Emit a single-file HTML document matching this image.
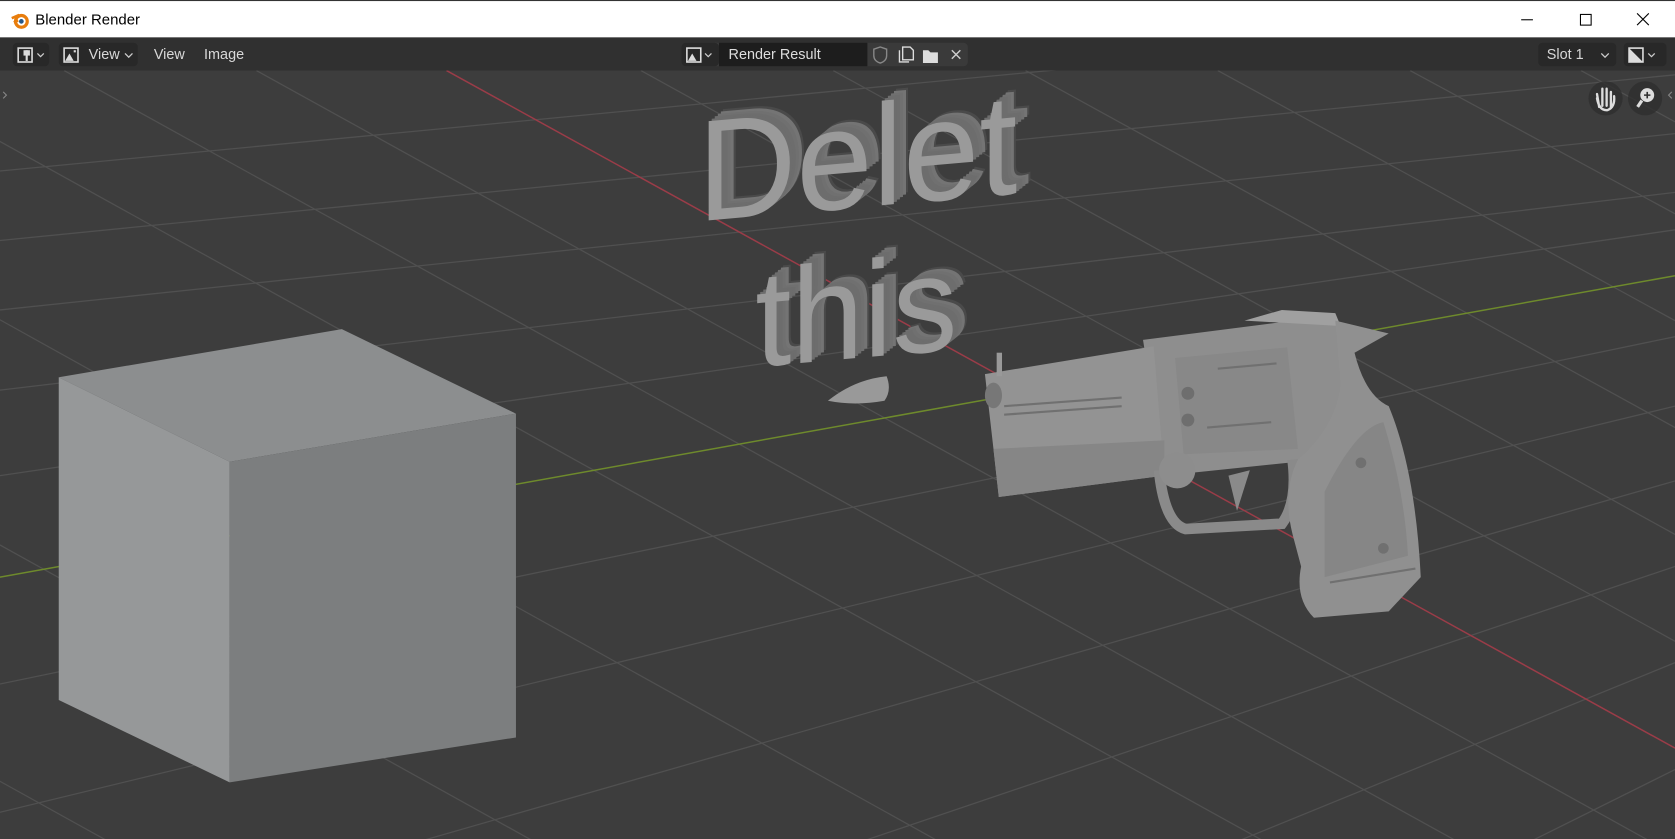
<!DOCTYPE html>
<html><head><meta charset="utf-8">
<style>
html,body{margin:0;padding:0;width:1675px;height:839px;overflow:hidden;background:#3d3d3d;font-family:"Liberation Sans",sans-serif;}
#w{position:absolute;left:0;top:0;width:1568px;height:785px;overflow:hidden;transform-origin:0 0;transform:scale(1.06824,1.06879);}
#title{position:absolute;left:0;top:0;width:1568px;height:35px;background:#fff;border-top:1px solid #333;box-sizing:border-box;}
#title .t{position:absolute;left:33px;top:9px;font-size:14px;color:#000;}
#hdr{position:absolute;left:0;top:35px;width:1568px;height:31px;background:#303030;}
.btn{position:absolute;top:5px;height:22px;background:#282828;border-radius:4px;}
.txt{position:absolute;top:8px;font-size:13.5px;color:#d8d8d8;}
#vp{position:absolute;left:0;top:66px;}
.word{position:absolute;font-family:"Liberation Sans",sans-serif;color:#9a9a9a;font-weight:normal;white-space:nowrap;line-height:1;}
</style></head><body><div id="w">
<div id="title">
<svg style="position:absolute;left:10px;top:9px" width="18" height="18" viewBox="0 0 18 18"><circle cx="10" cy="10" r="5.5" fill="none" stroke="#e87d0d" stroke-width="3"/><circle cx="10" cy="10" r="2.2" fill="#265787"/><path d="M1 7 L8 4 M3 11 L7 9" stroke="#e87d0d" stroke-width="2.5"/></svg>
<div class="t">Blender Render</div>
<div style="position:absolute;left:1424px;top:17px;width:11px;height:1px;background:#000"></div>
<div style="position:absolute;left:1479px;top:12px;width:9px;height:9px;border:1px solid #000"></div>
<svg style="position:absolute;left:1532px;top:11px" width="12" height="12"><path d="M0.5 0.5 L11.5 11.5 M11.5 0.5 L0.5 11.5" stroke="#000" stroke-width="1.1"/></svg>
</div>
<div id="hdr">
 <div class="btn" style="left:12px;width:34px"></div>
 <svg style="position:absolute;left:16px;top:9px" width="28" height="15"><rect x="1" y="1" width="13" height="13" fill="none" stroke="#ddd" stroke-width="1.5"/><rect x="6" y="3" width="6" height="5" fill="#ddd"/><rect x="8" y="3" width="2" height="10" fill="#ddd"/><path d="M19 6 l3 3 l3 -3" stroke="#ccc" fill="none" stroke-width="1.2"/></svg>
 <div class="btn" style="left:55px;width:74px"></div>
 <svg style="position:absolute;left:59px;top:9px" width="16" height="15"><rect x="1" y="1" width="13" height="13" fill="none" stroke="#ddd" stroke-width="1.5"/><path d="M2 13 L6 6 L10 13Z" fill="#ddd"/><rect x="10" y="3" width="2" height="2" fill="#ddd"/></svg>
 <div class="txt" style="left:83px">View</div>
 <svg style="position:absolute;left:116px;top:13px" width="10" height="8"><path d="M1 2 l3.5 3.5 l3.5 -3.5" stroke="#ccc" fill="none" stroke-width="1.2"/></svg>
 <div class="txt" style="left:144px">View</div>
 <div class="txt" style="left:191px">Image</div>
 <div class="btn" style="left:638px;width:268px;background:#3a3a3a"></div>
 <div class="btn" style="left:638px;width:35px"></div>
 <svg style="position:absolute;left:642px;top:9px" width="28" height="15"><rect x="1" y="1" width="13" height="13" fill="none" stroke="#ddd" stroke-width="1.5"/><path d="M2 13 L6 6 L10 13Z" fill="#ddd"/><path d="M18 6 l3 3 l3 -3" stroke="#ccc" fill="none" stroke-width="1.2"/></svg>
 <div style="position:absolute;left:673px;top:5px;width:139px;height:22px;background:#1d1d1d"></div>
 <div class="txt" style="left:682px;color:#ddd">Render Result</div>
 <svg style="position:absolute;left:815px;top:8px" width="90" height="17"><path d="M3 3 L9 1 L15 3 L15 9 Q15 14 9 16 Q3 14 3 9Z" fill="none" stroke="#888" stroke-width="1.3"/><path d="M30 1 h7 l3 3 v9 h-10z M27 4 v11 h9" fill="none" stroke="#ddd" stroke-width="1.3"/><path d="M49 4 h5 l2 2 h7 v10 h-14z" fill="#ddd"/><path d="M76 4 l8 8 M84 4 l-8 8" stroke="#ccc" stroke-width="1.4"/></svg>
 <div class="btn" style="left:1440px;width:73px"></div>
 <div class="txt" style="left:1448px">Slot 1</div>
 <svg style="position:absolute;left:1498px;top:13px" width="10" height="8"><path d="M1 2 l3.5 3.5 l3.5 -3.5" stroke="#ccc" fill="none" stroke-width="1.2"/></svg>
 <div class="btn" style="left:1520px;width:40px"></div>
 <svg style="position:absolute;left:1524px;top:9px" width="32" height="15"><rect x="1" y="1" width="13" height="13" fill="none" stroke="#ddd" stroke-width="1.5"/><path d="M1 1 L14 14 L1 14Z" fill="#ddd"/><path d="M19 6 l3 3 l3 -3" stroke="#ccc" fill="none" stroke-width="1.2"/></svg>
</div>
<svg id="vp" width="1568" height="719" viewBox="0 66 1568 719">
<rect x="0" y="66" width="1568" height="719" fill="#3d3d3d"/>
<g stroke="#505050" stroke-width="1.2" fill="none">
 <line x1="0" y1="160" x2="1568" y2="10"/>
 <line x1="0" y1="225" x2="1568" y2="70"/>
 <line x1="0" y1="290" x2="1568" y2="125"/>
 <line x1="0" y1="365" x2="1568" y2="180"/>
 <line x1="0" y1="445" x2="1568" y2="215"/>
 <line x1="0" y1="640" x2="1568" y2="315"/>
 <line x1="0" y1="760" x2="1568" y2="380"/>
 <line x1="0" y1="900" x2="1568" y2="450"/>
 <line x1="0" y1="1060" x2="1568" y2="530"/>
 <line x1="0" y1="1260" x2="1568" y2="620"/>
 <line x1="0" y1="1500" x2="1568" y2="720"/>
 <line x1="-1200" y1="66" x2="1568" y2="1600"/>
 <line x1="-800" y1="66" x2="1568" y2="1380"/>
 <line x1="-420" y1="66" x2="1568" y2="1170"/>
 <line x1="-120" y1="66" x2="1568" y2="1000"/>
 <line x1="60" y1="66" x2="1568" y2="900"/>
 <line x1="240" y1="66" x2="1568" y2="800"/>
 <line x1="600" y1="66" x2="1568" y2="600"/>
 <line x1="780" y1="66" x2="1568" y2="500"/>
 <line x1="960" y1="66" x2="1568" y2="400"/>
 <line x1="1140" y1="66" x2="1568" y2="300"/>
 <line x1="1320" y1="66" x2="1568" y2="200"/>
 <line x1="1480" y1="66" x2="1568" y2="114"/>
</g>
<line x1="0" y1="540" x2="1568" y2="258" stroke="#6e8a2c" stroke-width="1.4"/>
<line x1="418" y1="66" x2="1568" y2="700" stroke="#9a3c48" stroke-width="1.4"/>
<!-- cube -->
<polygon points="55,353 320,308 483,387 215,432" fill="#8c8e8f"/>
<polygon points="55,353 215,432 215,732 55,655" fill="#969899"/>
<polygon points="215,432 483,387 483,690 215,732" fill="#7c7e7f"/>
<!-- bullet -->
<path d="M775 375 Q800 355 830 352 Q835 365 828 375 Q800 380 775 375Z" fill="#999"/>
<!-- gun -->
<g>
 <polygon points="1070,318 1250,295 1262,420 1215,432 1090,445" fill="#8e8e8e"/>
 <polygon points="1165,300 1200,290 1250,293 1255,305" fill="#a0a0a0"/>
 <polygon points="922,350 1080,324 1090,445 935,465 930,420" fill="#939393"/>
 <polygon points="930,420 1090,412 1090,445 935,465" fill="#868686"/>
 <rect x="933" y="330" width="5" height="22" fill="#999"/>
 <ellipse cx="930" cy="370" rx="8" ry="12" fill="#777"/>
 <polygon points="1100,335 1205,325 1215,420 1108,425" fill="#888"/>
 <circle cx="1112" cy="368" r="6" fill="#6e6e6e"/><circle cx="1112" cy="393" r="6" fill="#6e6e6e"/>
 <path d="M1140 345 L1195 340 M1130 400 L1190 395 M940 380 L1050 372 M940 388 L1050 380" stroke="#707070" stroke-width="2"/>
 <path d="M1085 440 Q1090 490 1110 495 L1200 490 Q1215 470 1210 430" fill="none" stroke="#8a8a8a" stroke-width="10"/>
 <path d="M1150 445 L1158 478 L1170 440" fill="#8a8a8a"/>
 <circle cx="1102" cy="440" r="17" fill="#8d8d8d"/>
 <path d="M1250 300 L1300 312 L1268 330 Q1278 370 1300 380 Q1325 440 1330 540 L1300 572 L1230 578 Q1212 560 1218 530 L1210 500 Q1200 460 1215 430 Q1250 400 1255 360 Z" fill="#909090"/>
 <path d="M1240 460 Q1270 400 1295 395 Q1315 460 1318 520 L1240 540 Z" fill="#868686"/>
 <circle cx="1274" cy="433" r="5" fill="#707070"/><circle cx="1295" cy="513" r="5" fill="#707070"/>
 <path d="M1245 545 L1325 532" stroke="#707070" stroke-width="2"/>
</g>
<!-- nav gizmo -->
<circle cx="1503" cy="92" r="16" fill="#2e2e2e" opacity="0.8"/>
<circle cx="1540" cy="92" r="16" fill="#2e2e2e" opacity="0.8"/>
<path d="M1497 100 L1495 88 M1500 99 L1500 83 M1504 99 L1504 83 M1508 100 L1508 86 M1495 92 Q1497 104 1505 103 Q1512 100 1511 90" stroke="#ddd" stroke-width="2.2" fill="none" stroke-linecap="round"/>
<circle cx="1542" cy="89" r="6.5" fill="#ddd"/><path d="M1537 94 L1533 100" stroke="#ddd" stroke-width="3"/><path d="M1539 89 h6 M1542 86 v6" stroke="#2e2e2e" stroke-width="1.5"/>
<path d="M3 86 l3 3 l-3 3" stroke="#888" fill="none"/><path d="M1565 86 l-3 3 l3 3" stroke="#888" fill="none"/>
</svg>
<div class="word" style="left:645px;top:80px;font-size:135px;transform:skewY(-5deg) scaleX(0.95);text-shadow:3px -2px 0 #6d6d6d,6px -4px 0 #6d6d6d,9px -6px 0 #707070,12px -8px 0 #747474,14px -10px 0 #4a4a4a;">Delet</div>
<div class="word" style="left:702px;top:228px;font-size:128px;transform:skewY(-5deg) scaleX(0.95);text-shadow:3px -2px 0 #6d6d6d,6px -4px 0 #6d6d6d,9px -6px 0 #707070,12px -8px 0 #747474,14px -10px 0 #4a4a4a;">this</div>
</div></body></html>
